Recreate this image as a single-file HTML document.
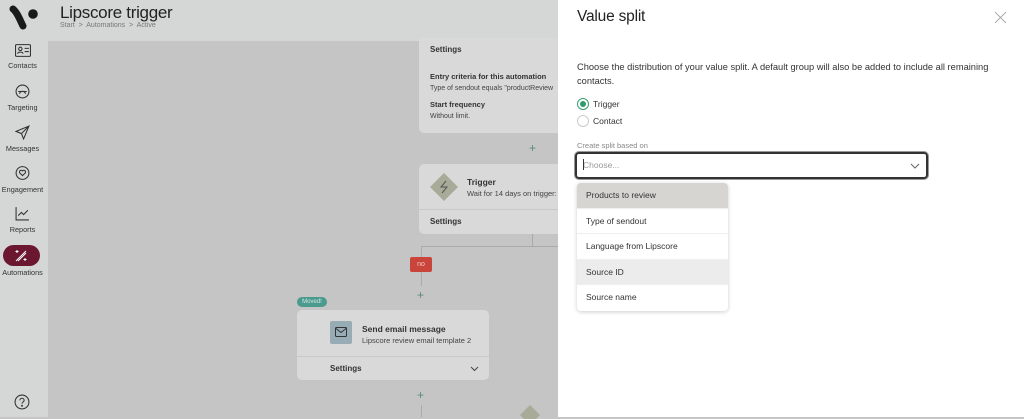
<!DOCTYPE html>
<html><head><style>
*{box-sizing:border-box;margin:0;padding:0}
body{width:1024px;height:417px;overflow:hidden;position:relative;font-family:"Liberation Sans",sans-serif;background:#c4c5c4;color:#222}
.a{position:absolute}
.side{left:0;top:0;width:48px;height:417px;background:#d5d6d6}
.hdr{left:48px;top:0;width:510px;height:41px;background:#d5d6d6}
.nav{position:absolute;left:0;width:45px;text-align:center;font-size:7.3px;color:#333}
.nav svg{display:block;margin:0 auto 4px}
.card{position:absolute;background:#d8d9d8;border-radius:5px}
.panel{left:558px;top:0;width:466px;height:417px;background:#fff}
.item{height:25.6px;line-height:25.6px;padding-left:9px;font-size:8.5px;color:#333;border-bottom:1px solid #eee}
</style></head><body>
<div class="a side"></div>
<div class="a hdr"></div>
<!-- logo -->
<svg class="a" style="left:8px;top:4px" width="30" height="26" viewBox="0 0 30 26"><path d="M5 5 C9 8 12 16 15 22" stroke="#1a1a1a" stroke-width="7" stroke-linecap="round" fill="none"/><circle cx="25" cy="10" r="4.8" fill="#1a1a1a"/></svg>
<div class="a" style="left:60px;top:3px;font-size:17px;color:#222;letter-spacing:-0.3px">Lipscore trigger</div>
<div class="a" style="left:60px;top:22px;font-size:7px;color:#777">Start &nbsp;&gt;&nbsp; Automations &nbsp;&gt;&nbsp; Active</div>

<div class="nav" style="top:44px"><svg width="16" height="13" viewBox="0 0 15 12" fill="none" stroke="#333"><rect x="0.5" y="0.5" width="14" height="11" rx="1"/><circle cx="5" cy="4.5" r="1.6"/><path d="M2.5 9c0-2 5-2 5 0M9 4h4M9 7h4"/></svg>Contacts</div>
<div class="nav" style="top:84px"><svg width="15" height="15" viewBox="0 0 14 14" fill="none" stroke="#333"><circle cx="7" cy="7" r="6"/><path d="M3 7h8M4 9c2-3 4-3 6 0"/></svg>Targeting</div>
<div class="nav" style="top:125px"><svg width="15" height="15" viewBox="0 0 14 14" fill="none" stroke="#333"><path d="M13 1L1 6l5 2 2 5z M6 8l7-7"/></svg>Messages</div>
<div class="nav" style="top:165px"><svg width="15" height="16" viewBox="0 0 14 15" fill="none" stroke="#333"><circle cx="7" cy="7.5" r="6"/><path d="M7 10L4.5 7.5a1.5 1.5 0 012.5-2 1.5 1.5 0 012.5 2z"/></svg>Engagement</div>
<div class="nav" style="top:206px"><svg width="15" height="15" viewBox="0 0 14 14" fill="none" stroke="#333"><path d="M1 1v12h12M3 9l3-3 2 2 4-4"/></svg>Reports</div>
<div class="a" style="left:3px;top:245px;width:37px;height:21px;border-radius:11px;background:#6b1730"></div>
<svg class="a" style="left:14px;top:249px" width="14" height="13" viewBox="0 0 14 13" fill="none" stroke="#fff"><path d="M2 12L12 2M4 12l8-8M3 1v3M1.5 2.5h3M11 9v3M9.5 10.5h3"/></svg>
<div class="nav" style="top:268px">Automations</div>
<svg class="a" style="left:14px;top:394px" width="16" height="16" viewBox="0 0 15 15" fill="none" stroke="#333"><circle cx="7.5" cy="7.5" r="6.5"/><path d="M5.5 6a2 2 0 114 0c0 1.5-2 1.5-2 3"/><circle cx="7.5" cy="11" r="0.4"/></svg>

<!-- canvas -->
<div class="card" style="left:419px;top:38px;width:150px;height:95px;border-radius:0 0 5px 5px"></div>
<div class="a" style="left:430px;top:45px;font-size:8px;font-weight:bold;color:#333">Settings</div>
<div class="a" style="left:430px;top:72px;font-size:7.5px;font-weight:bold;color:#333">Entry criteria for this automation</div>
<div class="a" style="left:430px;top:85px;font-size:7px;color:#444;white-space:nowrap">Type of sendout equals "productReview</div>
<div class="a" style="left:430px;top:100px;font-size:7.5px;font-weight:bold;color:#333">Start frequency</div>
<div class="a" style="left:430px;top:113px;font-size:7px;color:#444">Without limit.</div>
<div class="a" style="left:529px;top:141px;font-size:12px;color:#5a8a80">+</div>

<div class="card" style="left:419px;top:164px;width:150px;height:70px"></div>
<div class="a" style="left:419px;top:209px;width:139px;height:1px;background:#c8c9c8"></div>
<svg class="a" style="left:429px;top:172px" width="30" height="30" viewBox="0 0 30 30"><path d="M15 1L29 15 15 29 1 15z" fill="#a7ab97"/><path d="M17 9l-5 6h6l-5 6" stroke="#555" fill="none"/></svg>
<div class="a" style="left:467px;top:177px;font-size:8.5px;font-weight:bold;color:#333">Trigger</div>
<div class="a" style="left:467px;top:189px;font-size:7.5px;color:#444;white-space:nowrap">Wait for 14 days on trigger:</div>
<div class="a" style="left:430px;top:217px;font-size:8px;font-weight:bold;color:#333">Settings</div>

<div class="a" style="left:532px;top:234px;width:1px;height:12px;background:#aaa"></div>
<div class="a" style="left:421px;top:246px;width:140px;height:1px;background:#aaa"></div>
<div class="a" style="left:421px;top:246px;width:1px;height:40px;background:#aaa"></div>
<div class="a" style="left:410px;top:257px;width:22px;height:15px;background:#c9443a;border-radius:2px;color:#f0c8c4;font-size:7px;text-align:center;line-height:15px">no</div>
<div class="a" style="left:417px;top:288px;font-size:12px;color:#5a8a80">+</div>
<div class="a" style="left:297px;top:297px;width:30px;height:10px;background:#4a9a8e;border-radius:5px;color:#cfe6e1;font-size:6px;text-align:center;line-height:10px">Moved!</div>
<div class="card" style="left:297px;top:310px;width:192px;height:70px"></div>
<div class="a" style="left:297px;top:356px;width:192px;height:1px;background:#c8c9c8"></div>
<div class="a" style="left:330px;top:321px;width:22px;height:23px;background:#98acb6;border-radius:2px"></div>
<svg class="a" style="left:335px;top:327px" width="12" height="10" viewBox="0 0 12 10" fill="none" stroke="#333"><rect x="0.5" y="0.5" width="11" height="9" rx="1"/><path d="M1 1.5l5 4 5-4"/></svg>
<div class="a" style="left:362px;top:324px;font-size:8.5px;font-weight:bold;color:#333">Send email message</div>
<div class="a" style="left:362px;top:336px;font-size:7.5px;color:#444">Lipscore review email template 2</div>
<div class="a" style="left:330px;top:364px;font-size:8px;font-weight:bold;color:#333">Settings</div>
<svg class="a" style="left:470px;top:366px" width="9" height="6" viewBox="0 0 9 6" fill="none" stroke="#444"><path d="M1 1l3.5 3.5L8 1"/></svg>
<div class="a" style="left:417px;top:388px;font-size:12px;color:#5a8a80">+</div>
<div class="a" style="left:421px;top:405px;width:1px;height:12px;background:#aaa"></div>
<svg class="a" style="left:520px;top:405px" width="20" height="14" viewBox="0 0 20 14"><path d="M10 0L20 10 10 20 0 10z" fill="#a7ab97"/></svg>

<!-- panel -->
<div class="a panel"></div>
<div class="a" style="left:577px;top:8px;font-size:15.5px;color:#222;letter-spacing:-0.2px">Value split</div>
<svg class="a" style="left:995px;top:12px" width="11" height="11" viewBox="0 0 11 11" stroke="#aaa"><path d="M0 0l11 11M11 0L0 11"/></svg>
<div class="a" style="left:577px;top:60px;width:440px;font-size:9.3px;line-height:14px;color:#333">Choose the distribution of your value split. A default group will also be added to include all remaining contacts.</div>
<div class="a" style="left:577px;top:98px;width:12px;height:12px;border-radius:50%;border:1px solid #3a9b74"></div>
<div class="a" style="left:580px;top:101px;width:6px;height:6px;border-radius:50%;background:#2f9a6a"></div>
<div class="a" style="left:593px;top:99px;font-size:8.5px;color:#333">Trigger</div>
<div class="a" style="left:577px;top:115px;width:12px;height:12px;border-radius:50%;border:1px solid #ccc"></div>
<div class="a" style="left:593px;top:116px;font-size:8.5px;color:#333">Contact</div>
<div class="a" style="left:577px;top:141px;font-size:7.5px;color:#888">Create split based on</div>
<div class="a" style="left:575px;top:152px;width:353px;height:27px;border:2px solid #333;border-radius:4px;box-shadow:0 0 0 1px #999"></div>
<div class="a" style="left:583px;top:160px;font-size:8.5px;color:#999">Choose...</div>
<div class="a" style="left:583px;top:159px;width:1px;height:11px;background:#333"></div>
<svg class="a" style="left:910px;top:163px" width="10" height="6" viewBox="0 0 10 6" fill="none" stroke="#666"><path d="M1 1l4 4 4-4"/></svg>
<div class="a" style="left:577px;top:183px;width:151px;height:128px;background:#fff;border-radius:4px;box-shadow:0 1px 4px rgba(0,0,0,.2);overflow:hidden">
<div class="item" style="background:#d6d5d1">Products to review</div>
<div class="item">Type of sendout</div>
<div class="item">Language from Lipscore</div>
<div class="item" style="background:#ececec">Source ID</div>
<div class="item" style="border:0">Source name</div>
</div>
</body></html>
